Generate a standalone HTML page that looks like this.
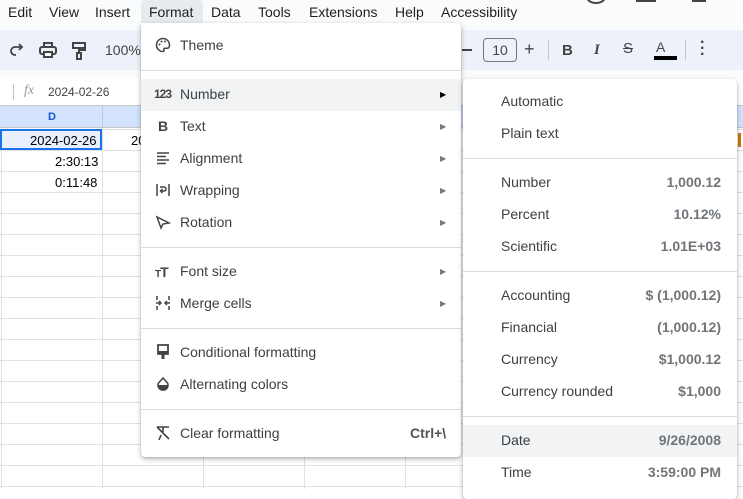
<!DOCTYPE html>
<html><head><style>
*{margin:0;padding:0;box-sizing:border-box}
body{width:743px;height:489px;overflow:hidden;background:#fff;font-family:"Liberation Sans",Arial,sans-serif;position:relative;color:#1f1f1f}
.a{position:absolute;white-space:nowrap}
.mb{font-size:14px;color:#1f1f1f;top:4px}
.grid{position:absolute;left:0;top:106px;width:743px;height:383px;
background-image:linear-gradient(#e1e1e1 1px,transparent 1px),linear-gradient(90deg,#e1e1e1 1px,transparent 1px);
background-size:743px 21px,101px 383px;background-position:0 2px,1px 0}
.menu{position:absolute;background:#fff;border-radius:4px;box-shadow:0 2px 6px rgba(0,0,0,.25),0 1px 2px rgba(0,0,0,.15)}
.it{position:absolute;font-size:14px;color:#3c4043;height:20px;line-height:20px}
.sep{position:absolute;height:1px;background:#dadce0}
.arr{position:absolute;font-size:8px;color:#777}
.v{position:absolute;font-size:14px;color:#70757a;text-align:right;font-weight:bold}
.ic{position:absolute;left:155px;width:16px;height:16px}
</style></head><body>
<div class="a" style="left:0;top:0;width:743px;height:30px;background:#f9fbfd"></div>
<div class="a mb" style="left:8px">Edit</div>
<div class="a mb" style="left:49px">View</div>
<div class="a mb" style="left:95px">Insert</div>
<div class="a" style="left:141px;top:0;width:62px;height:23px;background:#e8ebee;border-radius:4px 4px 0 0"></div>
<div class="a mb" style="left:149px">Format</div>
<div class="a mb" style="left:211px">Data</div>
<div class="a mb" style="left:258px">Tools</div>
<div class="a mb" style="left:309px">Extensions</div>
<div class="a mb" style="left:395px">Help</div>
<div class="a mb" style="left:441px">Accessibility</div>
<div class="a" style="left:586px;top:-10px;width:20px;height:14px;border:2px solid #444;border-radius:50%"></div>
<div class="a" style="left:636px;top:-6px;width:20px;height:8px;border:2px solid #444;border-top:none"></div>
<div class="a" style="left:692px;top:-6px;width:14px;height:8px;border:2px solid #444;border-top:none"></div>

<div class="a" style="left:0;top:30px;width:743px;height:40px;background:#edf2fa"></div>
<svg class="a" style="left:9px;top:43px" width="16" height="14"><path d="M13 4H6a4 4 0 0 0 0 8h1M10 1l3 3-3 3" fill="none" stroke="#444" stroke-width="1.8"/></svg>
<svg class="a" style="left:39px;top:42px" width="18" height="16"><rect x="1" y="5" width="16" height="7" rx="2" fill="none" stroke="#444" stroke-width="2"/><rect x="5" y="1" width="8" height="4" fill="none" stroke="#444" stroke-width="2"/><rect x="5" y="10" width="8" height="5" fill="#fff" stroke="#444" stroke-width="2"/></svg>
<svg class="a" style="left:72px;top:42px" width="14" height="18"><rect x="1" y="1" width="12" height="5" fill="none" stroke="#444" stroke-width="2"/><path d="M13 4h0v4H7v4" fill="none" stroke="#444" stroke-width="2"/><rect x="5" y="11" width="4" height="6" fill="none" stroke="#444" stroke-width="2"/></svg>
<div class="a" style="left:105px;top:42px;font-size:14px;color:#444">100%</div>
<div class="a" style="left:462px;top:49px;width:10px;height:2px;background:#444"></div>
<div class="a" style="left:483px;top:38px;width:34px;height:24px;border:1px solid #747775;border-radius:4px;font-size:14px;color:#444;text-align:center;line-height:22px">10</div>
<div class="a" style="left:524px;top:39px;font-size:18px;color:#444">+</div>
<div class="a" style="left:548px;top:40px;width:1px;height:20px;background:#c4c7c5"></div>
<div class="a" style="left:562px;top:42px;font-size:15px;font-weight:bold;color:#444">B</div>
<div class="a" style="left:594px;top:42px;font-size:15px;font-style:italic;font-family:'Liberation Serif',serif;font-weight:bold;color:#444">I</div>
<div class="a" style="left:623px;top:40px;font-size:15px;color:#444;text-decoration:line-through">S</div>
<div class="a" style="left:656px;top:39px;font-size:14px;color:#444">A</div>
<div class="a" style="left:654px;top:56px;width:23px;height:4px;background:#000"></div>
<div class="a" style="left:685px;top:40px;width:1px;height:20px;background:#c4c7c5"></div>
<div class="a" style="left:700px;top:40px;font-size:16px;font-weight:bold;color:#444;line-height:6px">·<br>·<br>·</div>

<div class="a" style="left:0;top:70px;width:743px;height:8px;background:#f9fbfd"></div>
<div class="a" style="left:13px;top:84px;width:1px;height:16px;background:#c4c7c5"></div>
<div class="a" style="left:24px;top:83px;font-size:14px;font-style:italic;font-family:'Liberation Serif',serif;color:#999">fx</div>
<div class="a" style="left:48px;top:85px;font-size:12px;color:#444">2024-02-26</div>
<div class="a" style="left:0;top:105px;width:743px;height:1px;background:#c4c7c5"></div>

<div class="grid"></div>
<div class="a" style="left:0;top:106px;width:743px;height:22px;background:#d3e3fd;border-bottom:1px solid #c4c7c5"></div>
<div class="a" style="left:102px;top:106px;width:1px;height:22px;background:#c4c7c5"></div>
<div class="a" style="left:48px;top:111px;font-size:11px;color:#0b57d0;font-weight:bold">D</div>
<div class="a" style="left:0;top:129px;width:102px;height:21px;background:#e8f0fe;border:2px solid #1a73e8"></div>
<div class="a" style="left:30px;top:133px;font-size:13px;color:#000">2024-02-26</div>
<div class="a" style="left:131px;top:133px;font-size:13px;color:#000">20</div>
<div class="a" style="left:55px;top:154px;font-size:13px;color:#000">2:30:13</div>
<div class="a" style="left:55px;top:175px;font-size:13px;color:#000">0:11:48</div>
<div class="a" style="left:738px;top:133px;width:3px;height:14px;background:#c77a00"></div>

<div class="menu" style="left:141px;top:23px;width:320px;height:434px;border-radius:0 4px 4px 4px"></div>
<div class="a" style="left:141px;top:79px;width:320px;height:32px;background:#f1f3f4"></div>
<svg class="ic" style="top:37px" viewBox="0 0 16 16"><path d="M8 1.5a6.5 6.5 0 1 0 0 13c1 0 1.3-.8.9-1.5-.5-.8 0-1.7 1-1.7H12c1.5 0 2.5-1.2 2.5-3C14.5 4.3 11.6 1.5 8 1.5z" fill="none" stroke="#444" stroke-width="1.5"/><circle cx="4.5" cy="7.5" r="1" fill="#444"/><circle cx="6.5" cy="4.5" r="1" fill="#444"/><circle cx="10" cy="4.5" r="1" fill="#444"/></svg>
<div class="it" style="left:180px;top:35px">Theme</div>
<div class="sep" style="left:141px;top:70px;width:320px"></div>
<div class="a" style="left:154px;top:87px;font-size:12px;font-weight:bold;color:#444;letter-spacing:-1px">123</div>
<div class="it" style="left:180px;top:84px">Number</div>
<div class="arr" style="left:440px;top:90px;color:#000">▶</div>
<div class="a" style="left:158px;top:118px;font-size:14px;font-weight:bold;color:#444">B</div>
<div class="it" style="left:180px;top:116px">Text</div><div class="arr" style="left:440px;top:122px">▶</div>
<svg class="ic" style="top:150px" viewBox="0 0 16 16"><path d="M2 3h12M2 6.5h9M2 10h12M2 13.5h9" stroke="#444" stroke-width="1.5"/></svg>
<div class="it" style="left:180px;top:148px">Alignment</div><div class="arr" style="left:440px;top:154px">▶</div>
<svg class="ic" style="top:182px" viewBox="0 0 16 16"><path d="M2 2v12M14 2v12M5 5h4a2 2 0 0 1 0 4H6m1.5-2L5.5 9l2 2" fill="none" stroke="#444" stroke-width="1.5"/></svg>
<div class="it" style="left:180px;top:180px">Wrapping</div><div class="arr" style="left:440px;top:186px">▶</div>
<svg class="ic" style="top:214px" viewBox="0 0 16 16"><path d="M2 3l4 11 2-4 6-1z" fill="none" stroke="#444" stroke-width="1.5"/></svg>
<div class="it" style="left:180px;top:212px">Rotation</div><div class="arr" style="left:440px;top:218px">▶</div>
<div class="sep" style="left:141px;top:247px;width:320px"></div>
<div class="a" style="left:155px;top:264px;font-size:14px;font-weight:bold;color:#444;letter-spacing:-1px"><span style="font-size:10px">T</span>T</div>
<div class="it" style="left:180px;top:261px">Font size</div><div class="arr" style="left:440px;top:267px">▶</div>
<svg class="ic" style="top:295px" viewBox="0 0 16 16"><path d="M2 1v4M2 11v4M14 1v4M14 11v4M1 8h5M4 6l2 2-2 2M15 8h-5M12 6l-2 2 2 2" fill="none" stroke="#444" stroke-width="1.5"/></svg>
<div class="it" style="left:180px;top:293px">Merge cells</div><div class="arr" style="left:440px;top:299px">▶</div>
<div class="sep" style="left:141px;top:328px;width:320px"></div>
<svg class="ic" style="top:344px" viewBox="0 0 16 16"><path d="M3 1h10v9H3z" fill="none" stroke="#444" stroke-width="1.8"/><path d="M3 7h10v3H3zM6.5 10h3v5h-3z" fill="#444"/></svg>
<div class="it" style="left:180px;top:342px">Conditional formatting</div>
<svg class="ic" style="top:376px" viewBox="0 0 16 16"><path d="M8 2L3.5 7a5 5 0 1 0 9 0z" fill="none" stroke="#444" stroke-width="1.5"/><path d="M3 9h10a5 5 0 0 1-10 0z" fill="#444"/></svg>
<div class="it" style="left:180px;top:374px">Alternating colors</div>
<div class="sep" style="left:141px;top:409px;width:320px"></div>
<svg class="ic" style="top:425px" viewBox="0 0 16 16"><path d="M2 2h12M8 2v5M2 2l12 12M6 10l-2 5" fill="none" stroke="#444" stroke-width="1.6"/></svg>
<div class="it" style="left:180px;top:423px">Clear formatting</div>
<div class="it" style="left:410px;top:423px;color:#555;font-weight:bold">Ctrl+\</div>

<div class="menu" style="left:463px;top:79px;width:274px;height:420px"></div>
<div class="a" style="left:463px;top:425px;width:274px;height:32px;background:#f1f3f4"></div>
<div class="it" style="left:501px;top:91px">Automatic</div>
<div class="it" style="left:501px;top:123px">Plain text</div>
<div class="sep" style="left:463px;top:158px;width:274px"></div>
<div class="it" style="left:501px;top:172px">Number</div><div class="it v" style="right:22px;top:172px">1,000.12</div>
<div class="it" style="left:501px;top:204px">Percent</div><div class="it v" style="right:22px;top:204px">10.12%</div>
<div class="it" style="left:501px;top:236px">Scientific</div><div class="it v" style="right:22px;top:236px">1.01E+03</div>
<div class="sep" style="left:463px;top:271px;width:274px"></div>
<div class="it" style="left:501px;top:285px">Accounting</div><div class="it v" style="right:22px;top:285px">$ (1,000.12)</div>
<div class="it" style="left:501px;top:317px">Financial</div><div class="it v" style="right:22px;top:317px">(1,000.12)</div>
<div class="it" style="left:501px;top:349px">Currency</div><div class="it v" style="right:22px;top:349px">$1,000.12</div>
<div class="it" style="left:501px;top:381px">Currency rounded</div><div class="it v" style="right:22px;top:381px">$1,000</div>
<div class="sep" style="left:463px;top:416px;width:274px"></div>
<div class="it" style="left:501px;top:430px">Date</div><div class="it v" style="right:22px;top:430px">9/26/2008</div>
<div class="it" style="left:501px;top:462px">Time</div><div class="it v" style="right:22px;top:462px">3:59:00 PM</div>
</body></html>
